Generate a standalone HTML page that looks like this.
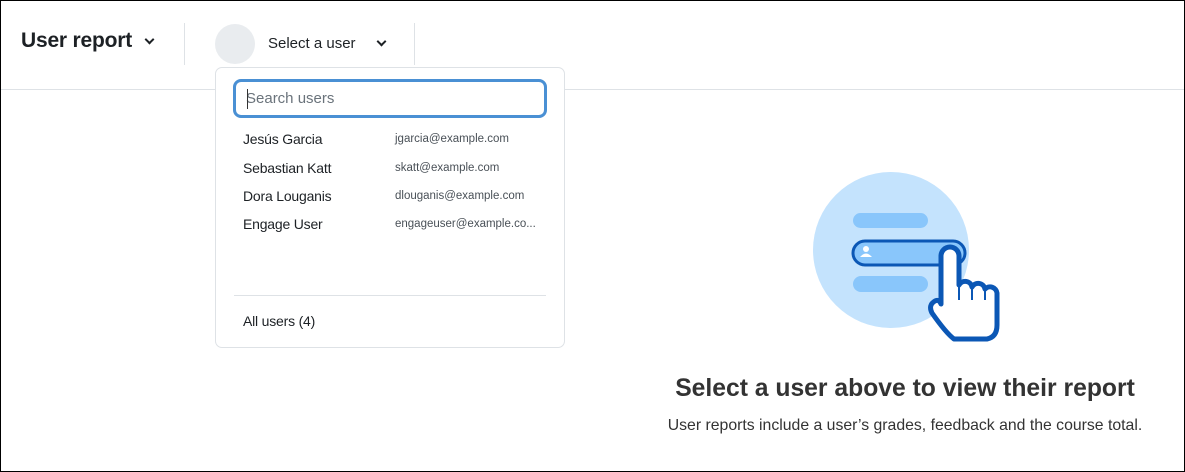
<!DOCTYPE html>
<html><head><meta charset="utf-8"><style>
body{margin:0;width:1185px;height:472px;overflow:hidden;font-family:"Liberation Sans",sans-serif;color:#1d2125;background:#fff}
.frame{position:absolute;left:0;top:0;width:1183px;height:470px;border:1px solid #000}
.hdr{position:absolute;left:1px;top:89px;width:1183px;height:1px;background:#dee2e6}
.vl{position:absolute;top:23px;width:1px;height:42px;background:#dee2e6}
.title{position:absolute;left:21px;top:29px;font-size:21px;font-weight:bold;letter-spacing:-0.2px}
.chev{display:inline-block;width:5px;height:5px;border-right:2px solid #1d2125;border-bottom:2px solid #1d2125;transform:rotate(45deg)}
.av{position:absolute;left:215px;top:24px;width:40px;height:40px;border-radius:50%;background:#e9ecef}
.sel{position:absolute;left:268px;top:35px;font-size:15px}
.dd{position:absolute;left:215px;top:67px;width:348px;height:279px;border:1px solid #dee2e6;border-radius:7px;background:#fff}
.inp{position:absolute;left:17px;top:11px;width:298px;height:33px;border:3px solid #4a90d4;border-radius:8px;font-size:15px;color:#6a737b;line-height:33px;padding-left:10px;box-sizing:content-box}
.inp:before{content:"";position:absolute;left:11px;top:7px;width:1px;height:20px;background:#333}
.row{position:absolute;left:27px;font-size:14px;letter-spacing:-0.2px}
.em{position:absolute;left:179px;font-size:11.5px;color:#495057}
.sep{position:absolute;left:18px;top:227px;width:312px;height:1px;background:#dee2e6}
h2{position:absolute;left:0;top:375px;width:1810px;margin:0;text-align:center;font-size:24.7px;font-weight:bold;color:#333}
.sub{position:absolute;left:0;top:417px;width:1810px;text-align:center;font-size:15.8px;color:#333}
</style></head><body>
<div class="frame"></div>
<div class="hdr"></div>
<div class="title">User report <span class="chev" style="margin-left:8px;position:relative;top:-4px"></span></div>
<div class="vl" style="left:184px"></div>
<div class="vl" style="left:414px"></div>
<div class="av"></div>
<div class="sel">Select a user <span class="chev" style="margin-left:18px;position:relative;top:-3px"></span></div>
<div class="dd">
<div class="inp">Search users</div>
<div class="row" style="top:63px">Jesús Garcia</div><div class="em" style="top:65px">jgarcia@example.com</div>
<div class="row" style="top:92px">Sebastian Katt</div><div class="em" style="top:94px">skatt@example.com</div>
<div class="row" style="top:120px">Dora Louganis</div><div class="em" style="top:122px">dlouganis@example.com</div>
<div class="row" style="top:148px">Engage User</div><div class="em" style="top:150px">engageuser@example.co...</div>
<div class="sep"></div>
<div class="row" style="top:245px">All users (4)</div>
</div>
<svg style="position:absolute;left:0;top:0" width="1185" height="472">
<circle cx="891" cy="250" r="78" fill="#c4e3fd"/>
<rect x="853" y="213" width="75" height="15" rx="7.5" fill="#89c6fb"/>
<rect x="853" y="276" width="75" height="16" rx="8" fill="#89c6fb"/>
<rect x="853" y="241" width="112" height="24" rx="12" fill="#89c6fb" stroke="#0b57b5" stroke-width="3"/>
<circle cx="866" cy="249" r="3" fill="#fff"/><path d="M860 257 q6 -7 12 0 z" fill="#fff"/>
<path d="M941 296 V256 a9 9 0 0 1 18 0 V285 a7 7 0 0 1 13 2 a7 7 0 0 1 13 2 a7 7 0 0 1 12 4 V325 q0 12 -10 14 H954 q-8 -6 -22 -26 q-4 -8 3 -12 q4 -2 6 3 z" fill="#fff" stroke="#0b57b5" stroke-width="5" stroke-linejoin="round"/>
<path d="M959 285 V300 M972 287 V300 M985 289 V300" stroke="#0b57b5" stroke-width="2"/>
</svg>
<h2>Select a user above to view their report</h2>
<div class="sub">User reports include a user’s grades, feedback and the course total.</div>
</body></html>
